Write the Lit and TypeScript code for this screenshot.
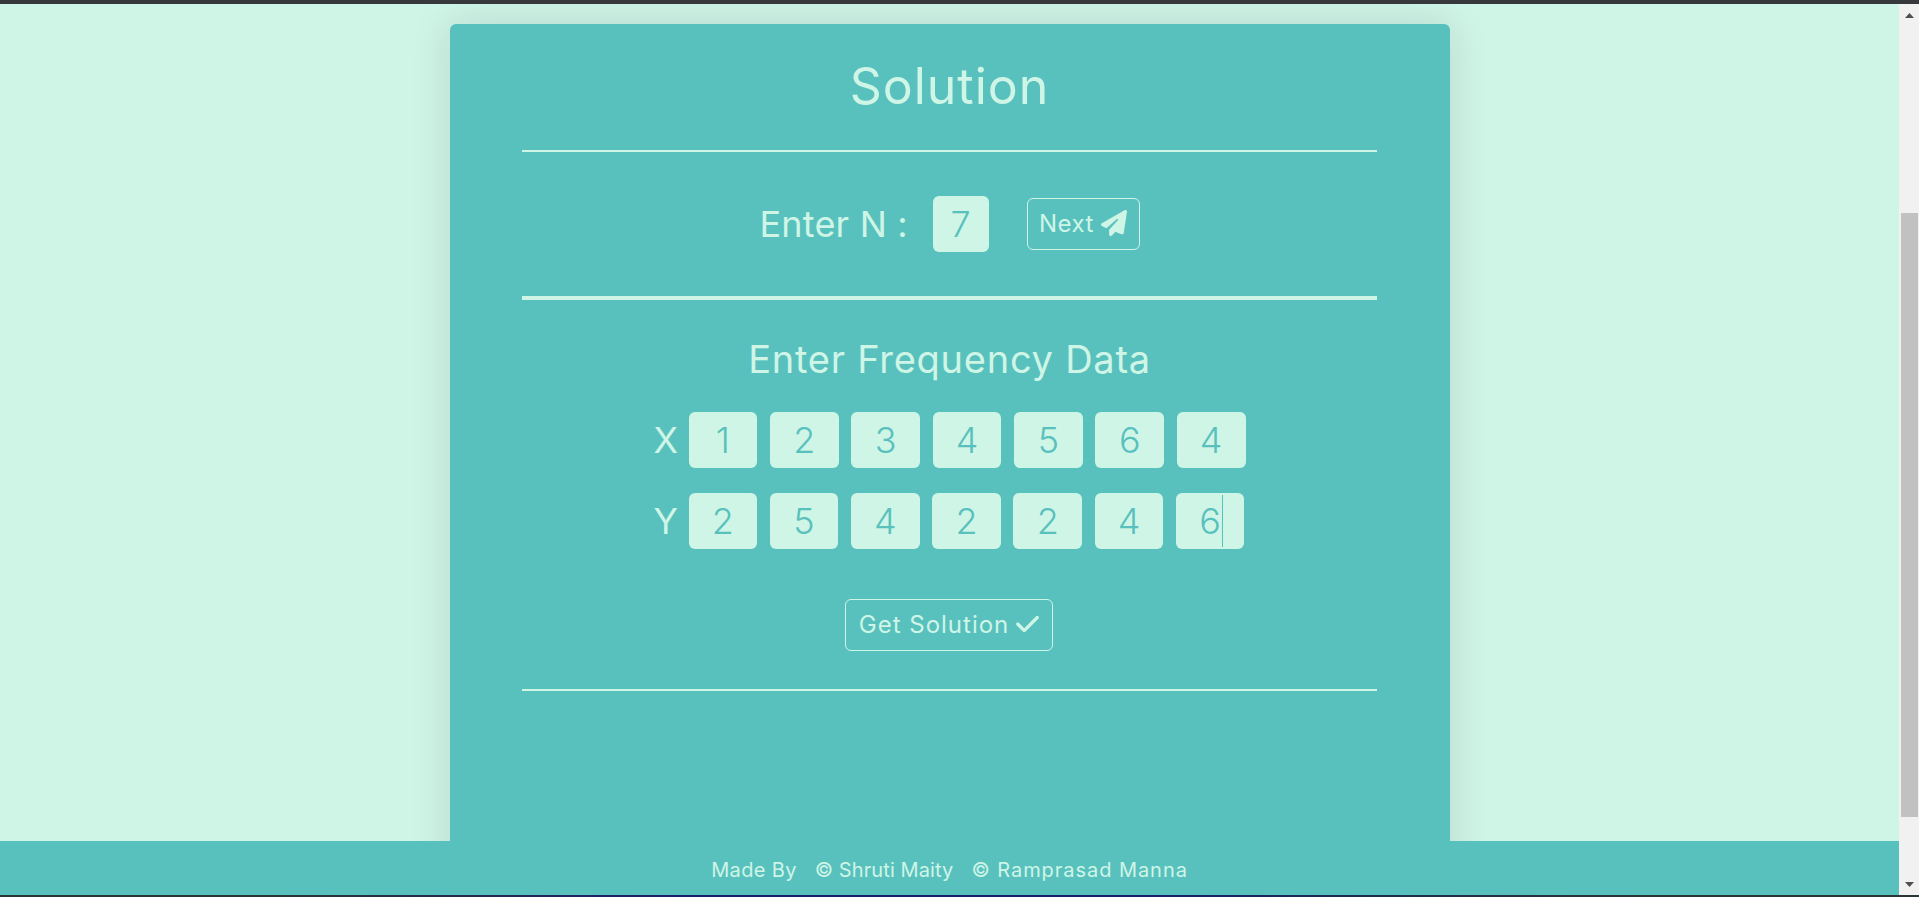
import { LitElement, html, css, svg } from "lit";
import { customElement } from "lit/decorators.js";

const PLANE = svg`<path d="M498.1 5.6c10.1 7 15.4 19.1 13.5 31.2l-64 416c-1.5 9.7-7.4 18.2-16 23s-18.9 5.4-28 1.6L284 427.7l-68.5 74.1c-8.9 9.7-22.9 12.9-35.2 8.1S160 493.2 160 480V396.4c0-4 1.5-7.8 4.2-10.7L331.8 202.8c5.8-6.3 5.6-16-.4-22s-15.7-6.4-22-.7L106 360.8 17.7 316.6C7.1 311.3 .3 300.7 0 288.9s5.9-22.8 16.1-28.7l448-256c10.7-6.1 23.9-5.5 34 1.4z"/>`;
const CHECK = svg`<path d="M438.6 105.4c12.5 12.5 12.5 32.8 0 45.3l-256 256c-12.5 12.5-32.8 12.5-45.3 0l-128-128c-12.5-12.5-12.5-32.8 0-45.3s32.8-12.5 45.3 0L160 338.7 393.4 105.4c12.5-12.5 32.8-12.5 45.3 0z"/>`;

@customElement("app-root")
export class AppRoot extends LitElement {
  static styles = css`
    :host {
      display: block;
      height: 897px;
      overflow: hidden;
      font-family: Inter, "Liberation Sans", sans-serif;
      --teal: #59c1bd;
      --mint: #cff5e7;
    }
    .window { display: flex; flex-direction: column; height: 100%; }
    .topbar { flex: 0 0 4px; background: #36383c; }
    .viewport { flex: 1; display: flex; min-height: 0; }
    .page { flex: 1; min-width: 0; display: flex; flex-direction: column; background: var(--mint); }
    .main { flex: 1; min-height: 0; overflow: hidden; padding-top: 20px; }
    .card {
      width: 1000px;
      height: calc(100% + 40px);
      margin: 0 auto;
      background: var(--teal);
      border-radius: 6px;
      box-shadow: 0 0 40px rgba(0, 0, 0, 0.12);
      color: var(--mint);
      display: flex;
      flex-direction: column;
      align-items: center;
    }
    h1 {
      margin: 0;
      height: 126px;
      padding-top: 33px;
      box-sizing: border-box;
      font-size: 50px;
      line-height: 58px;
      font-weight: 400;
      letter-spacing: 1px;
    }
    hr { width: 855px; margin: 0; border: 0; height: 2px; background: var(--mint); flex: none; }
    hr.thick { height: 4px; }
    .n-row { height: 144px; display: flex; align-items: center; }
    .n-label { font-size: 36px; font-weight: 400; width: 173px; letter-spacing: 0.2px; }
    .box {
      background: var(--mint);
      color: var(--teal);
      border-radius: 6px;
      height: 56px;
      display: flex;
      align-items: center;
      justify-content: center;
      font-size: 36px;
      font-weight: 350;
    }
    .n-box { width: 56px; margin-right: 38px; }
    .btn {
      box-sizing: border-box;
      height: 52px;
      border: 1px solid var(--mint);
      border-radius: 6px;
      background: transparent;
      color: var(--mint);
      font: inherit;
      font-size: 24px;
      display: flex;
      align-items: center;
      justify-content: center;
      gap: 7px;
      padding: 0 0 2px;
    }
    .btn svg { fill: currentColor; display: block; }
    .next { width: 113px; letter-spacing: 0.5px; }
    .solve { width: 208px; letter-spacing: 1px; margin-left: -1px; }
    h2 { margin: 36px 0 0; font-size: 38px; line-height: 46px; font-weight: 400; letter-spacing: 0.75px; }
    .grid { margin-top: 30px; display: flex; flex-direction: column; gap: 25px; width: 592px; }
    .row { display: flex; align-items: center; }
    .axis { width: 35px; font-size: 36px; font-weight: 400; }
    .cells { display: grid; grid-template-columns: repeat(7, 1fr); gap: 12.6px; width: 557px; }
    .row.y .cells { width: 556px; }
    .digit { position: relative; }
    .caret { position: absolute; left: 100%; top: 50%; width: 1px; height: 52px; margin: -26px 0 0 1px; background: var(--teal); }
    .solve-wrap { margin-top: 50px; margin-bottom: 38px; }
    .footer {
      flex: 0 0 54px;
      position: relative;
      background: var(--teal);
      color: var(--mint);
      font-size: 20px;
      letter-spacing: 0.35px;
      display: flex;
      align-items: flex-end;
      justify-content: center;
      gap: 18px;
      padding-bottom: 13px;
      box-sizing: border-box;
      font-weight: 400;
    }
    .footer .shruti { letter-spacing: 0.1px; }
    .footer .ram { letter-spacing: 0.95px; }
    .scrollbar {
      flex: 0 0 20px;
      background: #f1f1f1;
      display: flex;
      flex-direction: column;
      align-items: center;
      padding: 9px 0 8px;
      box-sizing: border-box;
    }
    .arrow { display: block; fill: #505050; flex: none; }
    .track { flex: 1; width: 100%; padding-top: 195px; padding-bottom: 65px; box-sizing: border-box; display: flex; justify-content: flex-end; }
    .thumb { width: 17px; height: 100%; background: #c1c1c1; margin-right: 1px; }
    .bottombar {
      flex: 0 0 2px;
      background: linear-gradient(90deg, #2a3538 0%, #2a3538 15%, #1a1f6a 35%, #1a1f6a 60%, #1c2a50 70%, #2a3538 85%, #2a3538 100%);
    }
  `;

  private cell(v: string, caret = false) {
    return html`<div class="box"><span class="digit">${v}${caret ? html`<span class="caret"></span>` : ""}</span></div>`;
  }

  render() {
    const xs = ["1", "2", "3", "4", "5", "6", "4"];
    const ys = ["2", "5", "4", "2", "2", "4", "6"];
    return html`
      <div class="window">
        <div class="topbar"></div>
        <div class="viewport">
          <div class="page">
            <div class="main">
              <div class="card">
                <h1>Solution</h1>
                <hr />
                <div class="n-row">
                  <div class="n-label">Enter N :</div>
                  <div class="box n-box">7</div>
                  <button class="btn next">Next <svg width="26" height="26" viewBox="0 0 512 512">${PLANE}</svg></button>
                </div>
                <hr class="thick" />
                <h2>Enter Frequency Data</h2>
                <div class="grid">
                  <div class="row">
                    <div class="axis">X</div>
                    <div class="cells">${xs.map((v) => this.cell(v))}</div>
                  </div>
                  <div class="row y">
                    <div class="axis">Y</div>
                    <div class="cells">${ys.map((v, i) => this.cell(v, i === 6))}</div>
                  </div>
                </div>
                <div class="solve-wrap">
                  <button class="btn solve">Get Solution <svg width="23" height="26" viewBox="0 0 448 512">${CHECK}</svg></button>
                </div>
                <hr />
              </div>
            </div>
            <div class="footer">
              <span>Made By</span><span class="shruti">© Shruti Maity</span><span class="ram">© Ramprasad Manna</span>
            </div>
          </div>
          <div class="scrollbar">
            <svg class="arrow" width="9" height="5" viewBox="0 0 9 5"><path d="M4.5 0L9 5H0z" /></svg>
            <div class="track"><div class="thumb"></div></div>
            <svg class="arrow" width="9" height="5" viewBox="0 0 9 5"><path d="M0 0h9L4.5 5z" /></svg>
          </div>
        </div>
        <div class="bottombar"></div>
      </div>
    `;
  }
}
